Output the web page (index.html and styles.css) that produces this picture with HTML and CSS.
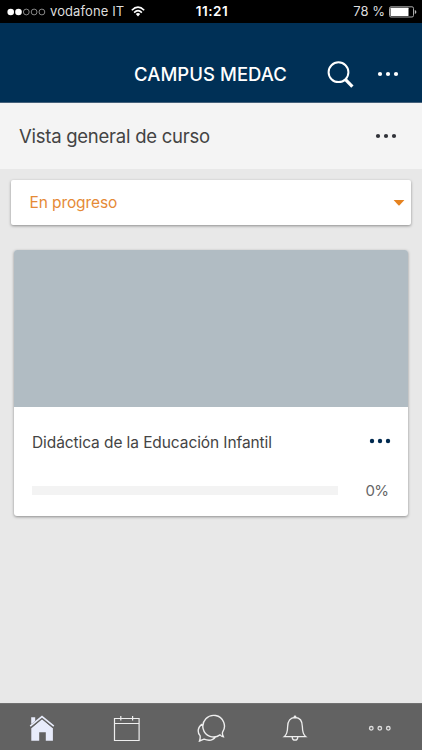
FILE: index.html
```html
<!DOCTYPE html>
<html lang="es">
<head>
<meta charset="utf-8">
<title>Campus MEDAC</title>
<link rel="stylesheet" href="styles.css">
</head>
<body>
<div class="app">
  <div class="status">
    <div class="carrier">
      <svg width="40" height="10" viewBox="0 0 40 10"><g fill="#fff"><circle cx="3.7" cy="5" r="3.3"/><circle cx="11.5" cy="5" r="3.3"/></g><g fill="none" stroke="#aaa" stroke-width=".8"><circle cx="19.3" cy="5" r="2.9"/><circle cx="27.1" cy="5" r="2.9"/><circle cx="34.9" cy="5" r="2.9"/></g></svg>
      <span class="operator">vodafone IT</span>
      <svg class="wifi" width="14" height="11" viewBox="0 0 14 11"><g fill="none" stroke="#fff" stroke-width="1.6"><path d="M.8 4.2Q7-1.8 13.2 4.2M3.1 6.6Q7 2.8 10.9 6.6"/></g><path d="M4.8 8.1Q7 6.1 9.2 8.1L7 10.4Z" fill="#fff"/></svg>
    </div>
    <span class="time">11:21</span>
    <div class="power">
      <span class="percent">78 %</span>
      <svg width="28" height="12" viewBox="0 0 28 12"><rect x=".5" y=".8" width="24" height="10.2" rx="1.5" fill="none" stroke="#aaa"/><rect x="1.5" y="1.8" width="18" height="8.2" rx=".5" fill="#fff"/><path d="M25.8 4v4q1.6-.5 1.6-2t-1.6-2Z" fill="#bbb"/></svg>
    </div>
  </div>
  <header class="header">
    <h1>CAMPUS MEDAC</h1>
    <svg class="search" width="28" height="28" viewBox="0 0 28 28" fill="none" stroke="#fff"><circle cx="11.5" cy="11.2" r="9.9" stroke-width="2"/><path d="M18.3 18.4 25.4 25.6" stroke-width="3.2"/></svg>
    <svg class="dots" width="22" height="6" viewBox="0 0 22 6" fill="#fff"><circle cx="3" cy="3" r="2.1"/><circle cx="11" cy="3" r="2.1"/><circle cx="19" cy="3" r="2.1"/></svg>
  </header>
  <div class="heading">
    <h2>Vista general de curso</h2>
    <svg width="22" height="6" viewBox="0 0 22 6" fill="#303238"><circle cx="3" cy="3" r="2.1"/><circle cx="11" cy="3" r="2.1"/><circle cx="19" cy="3" r="2.1"/></svg>
  </div>
  <main>
    <div class="select">
      <span class="selected">En progreso</span>
      <svg width="12" height="6" viewBox="0 0 12 6"><path d="M.6 0h10.8L6.6 5.3q-.6.6-1.2 0Z" fill="#e58220"/></svg>
    </div>
    <article class="card">
      <div class="cover"></div>
      <div class="course">
        <span class="name">Didáctica de la Educación Infantil</span>
        <svg width="22" height="6" viewBox="0 0 22 6" fill="#00294f"><circle cx="3" cy="3" r="2.2"/><circle cx="11" cy="3" r="2.2"/><circle cx="19" cy="3" r="2.2"/></svg>
      </div>
      <div class="progress"><div class="track"></div><span class="value">0%</span></div>
    </article>
  </main>
  <nav class="tabs">
    <span><svg width="28" height="30" viewBox="0 0 28 30"><path d="M3.2 10V3.2h4v5Z" fill="#e8ecfb"/><path d="M3.3 14.3 14 5.3l10.9 9v12.5h-7.1v-8.5h-6.6v8.5H3.3Z" fill="#e8ecfb"/><path d="M2.4 12.8 14 3.2l11.6 9.6" fill="none" stroke="#626262" stroke-width="3"/><path d="M2.2 12.2 14 2.6l11.8 9.6" fill="none" stroke="#e8ecfb" stroke-width="1.6"/></svg></span>
    <span><svg width="28" height="30" viewBox="0 0 28 30" fill="none" stroke="#eee" stroke-width="1.2"><path d="M1.5 4.5h24.6v22H1.5ZM1.5 9.5h24.6M7.8 2v4.6M19.6 2v4.6"/></svg></span>
    <span><svg width="30" height="30" viewBox="0 0 30 30" fill="none" stroke="#eee" stroke-width="1.4"><path d="M24 20.9a10.8 10.8 0 1 1 2.6-2.7q-.7 1.4.8 4.6Q25.6 22.7 24 20.9ZM6.2 10.2C1.5 13.2 1.3 18.2 3.9 21.4q.8 1.3-.4 5.6 3-1 4.6-1.8C12.8 27 17 26.4 19.5 22.8"/></svg></span>
    <span><svg width="28" height="30" viewBox="0 0 28 30" fill="none" stroke="#eee" stroke-width="1.3"><path d="M3.2 22.7q3.4-2.8 3.4-9.7C6.6 6.8 9.5 3.5 14 3.5s7.4 3.3 7.4 9.5q0 6.9 3.4 9.7ZM11.2 23.2q.2 3 2.8 3t2.8-3"/><circle cx="14" cy="3" r="1.4" fill="#eee" stroke="none"/></svg></span>
    <span><svg width="28" height="30" viewBox="0 0 28 30" fill="none" stroke="#ddd" stroke-width="1.3"><circle cx="5.3" cy="14.3" r="1.8"/><circle cx="13.8" cy="14.3" r="1.8"/><circle cx="22.3" cy="14.3" r="1.8"/></svg></span>
  </nav>
</div>
</body>
</html>
```
FILE: styles.css
```css
* { box-sizing: border-box; }
body { margin: 0; font-family: Inter, "Liberation Sans", sans-serif; color: #444; }
h1, h2 { margin: 0; }
svg { display: block; flex: none; }
span { white-space: nowrap; }
.app { width: 422px; height: 750px; display: flex; flex-direction: column; background: #e8e8e8; }
.status { height: 23px; flex: none; background: #000; color: #fff; display: grid; grid-template-columns: 1fr auto 1fr; align-items: center; padding: 0 5px 0 7px; font-size: 13px; line-height: 23px; }
.carrier, .power { display: flex; align-items: center; }
.operator { margin-left: 3px; letter-spacing: .1px; color: #ddd; }
.wifi { margin-left: 7px; }
.time { font-weight: 600; font-size: 13.5px; letter-spacing: .5px; }
.power { justify-content: flex-end; gap: 4px; color: #ddd; }
.header { height: 80px; flex: none; display: flex; align-items: center; background: #003056; color: #fff; padding: 22px 23px 0 134px; border-bottom: 1px solid #45617b; }
h1 { font-size: 18.5px; line-height: 22px; font-weight: 550; letter-spacing: .05px; white-space: nowrap; width: 193px; padding-top: 1px; }
.search { margin-top: 3px; }
.dots { margin-left: auto; }
.heading { height: 66px; flex: none; display: flex; align-items: center; justify-content: space-between; background: #f4f4f4; padding: 0 25px 0 19px; }
h2 { font-size: 18.5px; line-height: 24px; font-weight: 400; letter-spacing: -.25px; color: #434343; }
main { flex: 1; padding: 11px 11px 0; }
.select { height: 45px; background: #fff; border-radius: 2px; display: flex; align-items: center; justify-content: space-between; padding: 0 6px 0 18.5px; box-shadow: 0 1px 3px rgba(0,0,0,.4); color: #e58a36; font-size: 15.5px; }
.selected { letter-spacing: -.1px; }
.card { margin: 25px 3px 0 3px; height: 266px; background: #fff; border-radius: 3px; overflow: hidden; box-shadow: 0 1px 3px rgba(0,0,0,.4); }
.cover { height: 157px; background: #b1bcc3; }
.course { height: 68px; display: flex; align-items: center; justify-content: space-between; padding: 2px 17px 0 18px; font-size: 15.5px; letter-spacing: -.09px; }
.course svg { margin-top: -3px; }
.progress { display: flex; align-items: center; justify-content: space-between; height: 31px; padding: 0 20px 0 18px; }
.track { width: 306px; height: 9px; background: #f3f3f3; }
.value { font-size: 15px; letter-spacing: -.9px; color: #666; }
.tabs { height: 47px; flex: none; background: #626262; border-top: 1px solid #707070; display: grid; grid-template-columns: repeat(5, 1fr); align-items: center; justify-items: center; padding-top: 4px; }
```
